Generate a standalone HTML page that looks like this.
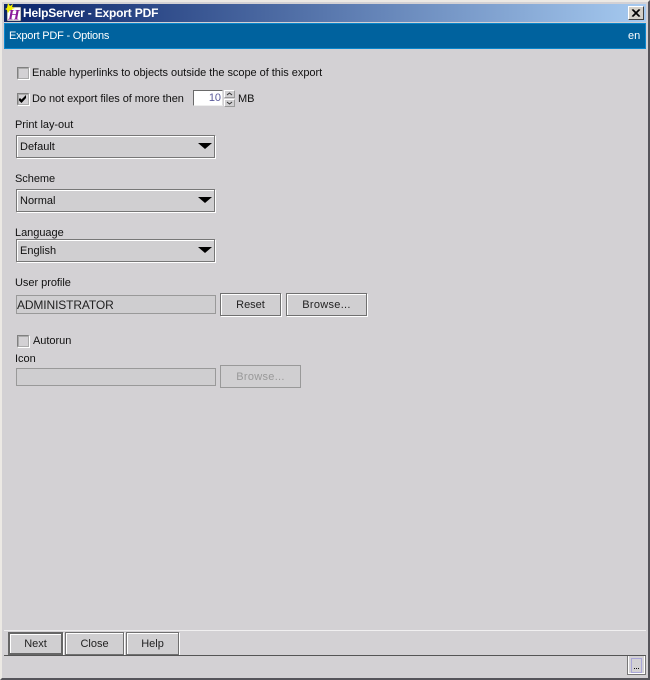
<!DOCTYPE html>
<html>
<head>
<meta charset="utf-8">
<style>
html,body{margin:0;padding:0;}
body{width:650px;height:680px;position:relative;overflow:hidden;background:#d3d1d4;font-family:"Liberation Sans",sans-serif;font-size:11px;color:#111;}
.a{position:absolute;white-space:nowrap;line-height:13px;letter-spacing:-.035px;}
.box{position:absolute;box-sizing:border-box;}
.cb{position:absolute;box-sizing:border-box;width:12px;height:12px;background:#d3d1d4;border:1px solid #808080;border-right-color:#aaa;border-bottom-color:#aaa;box-shadow:1px 1px 0 #fff,inset 1px 1px 0 #aaa;}
.btn{position:absolute;box-sizing:border-box;background:#d0cfd1;border:1px solid #707070;box-shadow:1px 1px 0 #fff,inset 1px 1px 0 #fff;text-align:center;font-size:11px;color:#222;}
.sel{position:absolute;left:16px;width:199px;height:23px;box-sizing:border-box;background:#d0cfd1;border:1px solid #777;box-shadow:1px 1px 0 #fff,inset 1px 1px 0 #fff;}
.sel span{position:absolute;left:3px;top:5px;line-height:13px;color:#111;}
.sel i{position:absolute;left:181px;top:7px;width:0;height:0;border-left:7px solid transparent;border-right:7px solid transparent;border-top:6px solid #000;}
.fld{position:absolute;box-sizing:border-box;background:#cfced0;border:1px solid #999;}
</style>
</head>
<body>
<div class="box" style="left:0;top:0;width:650px;height:680px;border-left:2px solid #ece9e4;border-right:2px solid #55545a;border-bottom:2px solid #55545a;border-top:2px solid #ece9e4;"></div>

<div class="box" style="left:4px;top:4px;width:642px;height:18px;background:linear-gradient(90deg,#0a246a 0%,#a6caf0 100%);"></div>
<svg class="box" style="left:5px;top:3px;" width="18" height="19" viewBox="0 0 18 19">
<rect x="2" y="4" width="14" height="14" fill="#fff" stroke="#333" stroke-width=".6"/>
<path d="M3 0l2 3 3-2-1 3 3 1-3 1 1 3-3-2-2 3-1-3-2-1 2-1z" fill="#f4f000"/>
<text x="3" y="16.500" font-family="Liberation Serif" font-weight="bold" font-style="italic" font-size="15" fill="#8b1a9a">H</text>
</svg>
<div class="a" style="left:23px;top:7px;font-size:12px;font-weight:bold;color:#fff;letter-spacing:-.18px;">HelpServer - Export PDF</div>
<div class="box" style="left:628px;top:6px;width:16px;height:14px;background:#d4d0c8;border:1px solid;border-color:#fff #404040 #404040 #fff;"></div>
<svg class="box" style="left:628px;top:6px;" width="16" height="14"><path d="M4 3.500l7 7M5 3.500l7 7M11 3.500l-7 7M12 3.500l-7 7" stroke="#000" fill="none"/></svg>

<div class="box" style="left:4px;top:23px;width:642px;height:26px;background:#00629e;border:1px solid #0a86cc;"></div>
<div class="a" style="left:9px;top:30px;color:#fff;letter-spacing:-.22px;">Export PDF - Options</div>
<div class="a" style="left:628px;top:30px;color:#fff;">en</div>

<div class="cb" style="left:17px;top:67px;"></div>
<div class="a" style="left:32px;top:67px;">Enable hyperlinks to objects outside the scope of this export</div>

<div class="cb" style="left:17px;top:93px;"></div>
<svg class="box" style="left:17px;top:93px;" width="12" height="12"><path d="M2 6l1 -1 1.500 1.500L9 2v3L4.500 10 2 7.500z" fill="#000"/></svg>
<div class="a" style="left:32px;top:93px;letter-spacing:-.05px;">Do not export files of more then</div>
<div class="box" style="left:193px;top:90px;width:30px;height:16px;background:#fff;border:1px solid #6a6a6a;border-right-color:#ddd;border-bottom-color:#eee;"></div>
<div class="a" style="left:193px;top:92px;width:28px;text-align:right;color:#5a5a9a;">10</div>
<div class="box" style="left:224px;top:90px;width:11px;height:8px;background:#d0cfd1;border:1px solid #999;border-top-color:#fff;border-left-color:#fff;"></div>
<div class="box" style="left:224px;top:99px;width:11px;height:8px;background:#d0cfd1;border:1px solid #999;border-top-color:#fff;border-left-color:#fff;"></div>
<svg class="box" style="left:224px;top:90px;" width="11" height="17"><path d="M3 5l2.500-2 2.500 2M3 12l2.500 2 2.500-2" stroke="#333" fill="none"/></svg>
<div class="a" style="left:238px;top:93px;">MB</div>

<div class="a" style="left:15px;top:119px;">Print lay-out</div>
<div class="sel" style="top:135px;"><span>Default</span><i></i></div>
<div class="a" style="left:15px;top:173px;">Scheme</div>
<div class="sel" style="top:189px;"><span>Normal</span><i></i></div>
<div class="a" style="left:15px;top:227px;">Language</div>
<div class="sel" style="top:239px;"><span>English</span><i></i></div>
<div class="a" style="left:15px;top:277px;">User profile</div>

<div class="fld" style="left:16px;top:295px;width:200px;height:19px;"></div>
<div class="a" style="left:17px;top:299px;font-size:12px;letter-spacing:-.12px;color:#222;">ADMINISTRATOR</div>
<div class="btn" style="left:220px;top:293px;width:61px;height:23px;line-height:23px;">Reset</div>
<div class="btn" style="left:286px;top:293px;width:81px;height:23px;line-height:23px;letter-spacing:.3px;">Browse...</div>

<div class="cb" style="left:17px;top:335px;"></div>
<div class="a" style="left:33px;top:335px;">Autorun</div>
<div class="a" style="left:15px;top:353px;">Icon</div>
<div class="fld" style="left:16px;top:368px;width:200px;height:18px;"></div>
<div class="box" style="left:220px;top:365px;width:81px;height:23px;background:#d0cfd1;border:1px solid #999;text-align:center;line-height:23px;letter-spacing:.3px;color:#999;">Browse...</div>

<div class="box" style="left:4px;top:630px;width:642px;height:1px;background:#f0eff0;"></div>
<div class="btn" style="left:8px;top:632px;width:55px;height:23px;line-height:20px;border:2px solid #666;">Next</div>
<div class="btn" style="left:65px;top:632px;width:59px;height:23px;line-height:22px;">Close</div>
<div class="btn" style="left:126px;top:632px;width:53px;height:23px;line-height:22px;">Help</div>
<div class="box" style="left:4px;top:655px;width:642px;height:1px;background:#555;"></div>
<div class="box" style="left:627px;top:656px;width:19px;height:19px;border:1px solid #777;border-top:none;box-shadow:inset 1px 0 0 #fff,inset -1px 0 0 #fff,inset 0 -1px 0 #fff;"></div>
<div class="box" style="left:631px;top:658px;width:11px;height:15px;border:1px solid #a9a6d8;"></div>
<div class="box" style="left:634px;top:668px;width:1px;height:1px;background:#111;box-shadow:2px 0 0 #111,4px 0 0 #111;"></div>
</body>
</html>
